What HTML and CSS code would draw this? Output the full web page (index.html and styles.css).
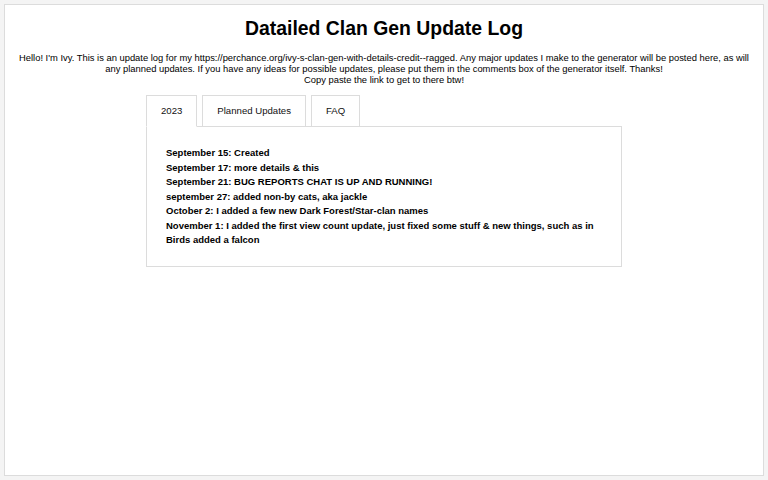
FILE: index.html
```html
<!DOCTYPE html>
<html>
<head>
<meta charset="utf-8">
<link rel="stylesheet" href="styles.css">
</head>
<body>
<div class="page">
  <h1 class="title">Datailed Clan Gen Update Log</h1>
  <p class="intro">Hello! I'm Ivy. This is an update log for my https://perchance.org/ivy-s-clan-gen-with-details-credit--ragged. Any major updates I make to the generator will be posted here, as will any planned updates. If you have any ideas for possible updates, please put them in the comments box of the generator itself. Thanks!<br>Copy paste the link to get to there btw!</p>
  <div class="tabs">
    <div class="tab-bar">
      <div class="tab active">2023</div>
      <div class="tab">Planned Updates</div>
      <div class="tab">FAQ</div>
    </div>
    <div class="panel">
      <div class="entry">September 15: Created</div>
      <div class="entry">September 17: more details &amp; this</div>
      <div class="entry">September 21: BUG REPORTS CHAT IS UP AND RUNNING!</div>
      <div class="entry">september 27: added non-by cats, aka jackle</div>
      <div class="entry">October 2: I added a few new Dark Forest/Star-clan names</div>
      <div class="entry">November 1: I added the first view count update, just fixed some stuff &amp; new things, such as in Birds added a falcon</div>
    </div>
  </div>
</div>
</body>
</html>
```
FILE: styles.css
```css
html, body {
  margin: 0;
  padding: 0;
}
body {
  background: #f4f4f4;
  padding: 4px;
  font-family: "Liberation Sans", Arial, sans-serif;
  color: #000;
}
.page {
  background: #fff;
  border: 1px solid #dcdcdc;
  box-sizing: border-box;
  height: 472px;
  padding: 0 10px;
}
.title {
  margin: 0;
  padding-top: 11px;
  font-size: 19.4px;
  line-height: 24px;
  text-align: center;
  font-weight: bold;
}
.intro {
  margin: 13px 0 0;
  font-size: 9.4px;
  line-height: 10.8px;
  text-align: center;
}
.tabs {
  width: 476px;
  margin: 10px auto 0;
}
.tab-bar {
  display: flex;
  gap: 5px;
  position: relative;
  z-index: 1;
}
.tab {
  border: 1px solid #dcdcdc;
  padding: 0 14px;
  height: 30px;
  line-height: 30px;
  font-size: 9.6px;
  color: #111;
  background: #fff;
}
.tab.active {
  border-bottom-color: #fff;
}
.panel {
  border: 1px solid #dcdcdc;
  margin-top: -1px;
  padding: 19px 19px 18px;
  font-size: 9.5px;
  font-weight: bold;
  line-height: 14.5px;
}
```
